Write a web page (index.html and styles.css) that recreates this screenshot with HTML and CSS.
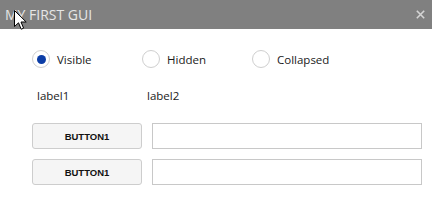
FILE: index.html
```html
<!DOCTYPE html>
<html>
<head>
<meta charset="utf-8">
<title>My First GUI</title>
<link rel="stylesheet" href="styles.css">
</head>
<body>
<div class="window">
  <div class="titlebar">
    <span class="title">MY FIRST GUI</span>
    <svg class="close" width="9" height="9" viewBox="0 0 9 9">
      <path d="M0.8 0.8 L8.2 8.2 M8.2 0.8 L0.8 8.2" stroke="#d4d4d4" stroke-width="1.6"/>
    </svg>
  </div>
  <div class="content">
    <div class="radios">
      <label class="radio"><span class="dot checked"></span>Visible</label>
      <label class="radio"><span class="dot"></span>Hidden</label>
      <label class="radio"><span class="dot"></span>Collapsed</label>
    </div>
    <div class="labels">
      <span>label1</span>
      <span>label2</span>
    </div>
    <div class="row">
      <div class="btn">BUTTON1</div>
      <div class="textbox"></div>
    </div>
    <div class="row">
      <div class="btn">BUTTON1</div>
      <div class="textbox"></div>
    </div>
  </div>
  <svg class="cursor" width="13" height="21" viewBox="0 0 13 21">
    <path d="M0.5 0.5 L0.5 16.5 L4.5 12.8 L7.2 19.2 L9.6 18.2 L7 12 L12.2 12 Z" fill="#fff" stroke="#000" stroke-width="1"/>
  </svg>
</div>
</body>
</html>
```
FILE: styles.css
```css
body {margin: 0; padding: 0; background: #fff; font-family: "Open Sans", "Noto Sans", sans-serif;}
.window {position: relative; width: 432px; height: 204px; overflow: hidden;}
.titlebar {height: 29px; background: #808080; display: flex; align-items: center; justify-content: space-between; padding: 0 7px 0 5px; color: #e6e6e6;}
.title {font-size: 14px;}
.close {display: block;}
.content {padding: 21px 10px 0 32px; font-size: 11.5px; color: #1a1a1a;}
.radios {display: flex; height: 18px;}
.radio {width: 110px; display: flex; align-items: center;}
.dot {width: 16px; height: 16px; border: 1px solid #cfcfcf; border-radius: 50%; margin-right: 7px; display: flex; align-items: center; justify-content: center; background: #fff;}
.dot.checked::after {content: ""; width: 9px; height: 9px; border-radius: 50%; background: #0c3da6;}
.labels {display: flex; margin-top: 20px; padding-left: 5px; height: 16px; line-height: 16px;}
.labels span {width: 110px;}
.row {display: flex; gap: 10px; margin-top: 19px;}
.row + .row {margin-top: 10px;}
.btn {width: 108px; height: 24px; border: 1px solid #cdcdcd; border-radius: 3px; background: #f5f5f5; display: flex; align-items: center; justify-content: center; font-family: "Liberation Sans", Arial, sans-serif; font-weight: bold; font-size: 9.5px; color: #111;}
.textbox {width: 268px; height: 24px; border: 1px solid #c8c8c8; background: #fff;}
.cursor {position: absolute; left: 14px; top: 10px;}
```
